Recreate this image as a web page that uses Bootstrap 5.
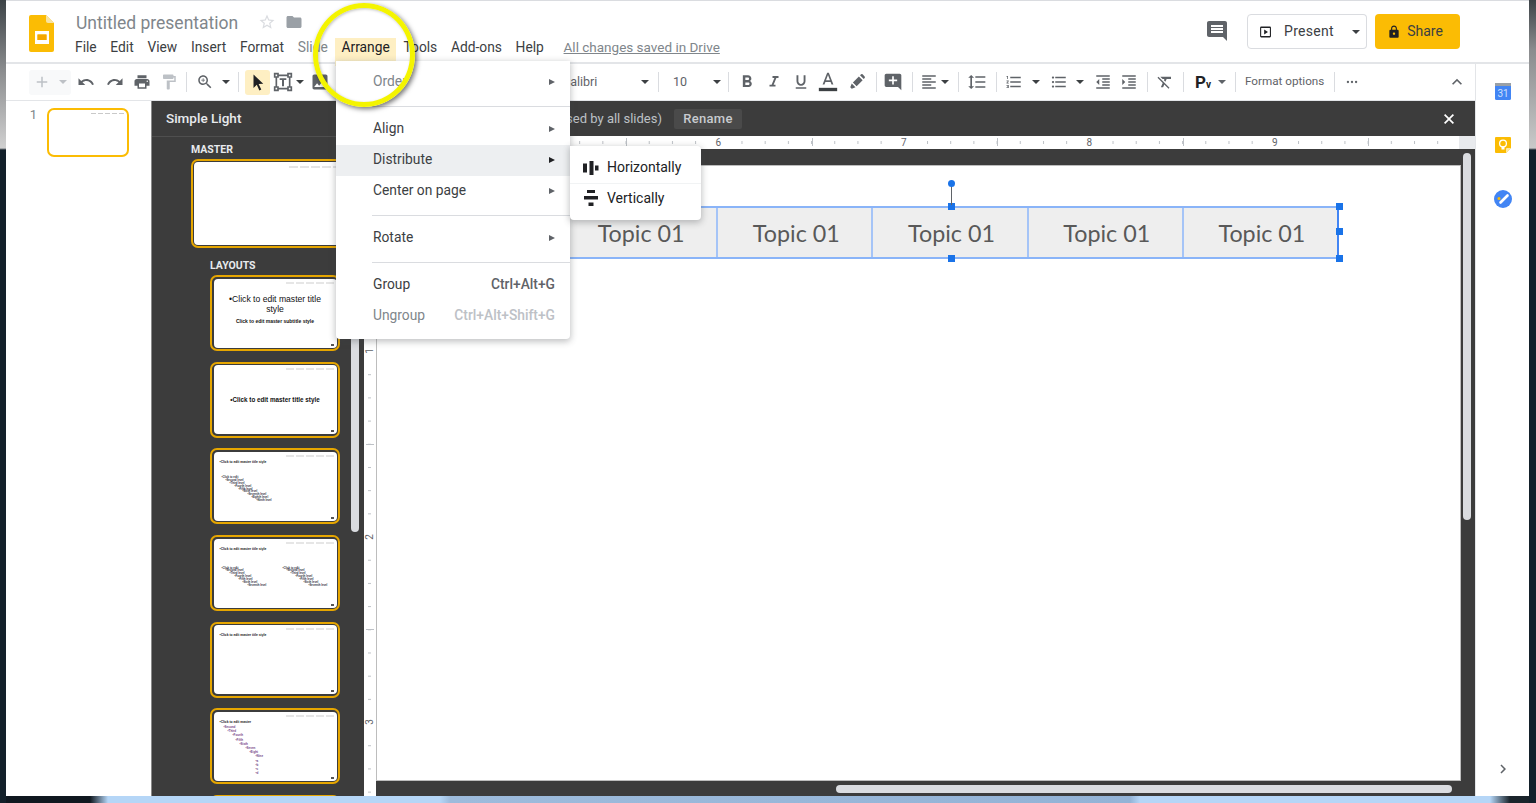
<!DOCTYPE html>
<html lang="en">
<head>
<meta charset="utf-8">
<title>Untitled presentation</title>
<link href="https://cdn.jsdelivr.net/npm/bootstrap@5.3.0/dist/css/bootstrap.min.css" rel="stylesheet">
<style>
html,body{height:803px;overflow:hidden}
body{font-family:Roboto,"Liberation Sans",sans-serif;background:#fff;color:#3c4043}
.screen{height:803px;width:1536px;padding:1px 7px 7px 6px;position:relative;
 background:
  linear-gradient(180deg,#3d4347 0,#8a8c8e 70px,#d0d0d0 148px,#13202a 150px,#13202a 100%) 0 0/6px 100% no-repeat,
  linear-gradient(180deg,#3d4347 0,#8a8c8e 50px,#c9c9c9 148px,#13202a 150px,#13202a 100%) 100% 0/7px 100% no-repeat,
  linear-gradient(90deg,#101820 0,#101820 90px,#b5d6f7 108px,#b5d6f7 440px,#9dbbdc 450px,#93b3d6 1130px,#b5d6f7 1140px,#b5d6f7 1490px,#1a242b 1510px,#1a242b 1530px,#b5d6f7 1536px) 0 100%/100% 7px no-repeat,
  #dadce0}
.appwin{height:795px;background:#fff;position:relative;overflow:hidden}
.topbar{height:61px;border-bottom:2px solid #e3e5e8;box-sizing:content-box}
.logo-box{width:70px;padding:14px 0 0 23px}
.doc-title{font-size:17.5px;line-height:22px;color:#80868b;padding-top:11px}
.title-icons{padding-top:12px;padding-left:20px;gap:9px}
.menu-row{gap:13.7px;font-size:13.8px;line-height:18px;margin-left:-1px;margin-top:4px;color:#3c4043;position:relative}
.menu-row .cur{background:linear-gradient(180deg,#feefc3 70%,#fdf3d0 100%);margin:0 -6px -10px;padding:0 6px 10px;color:#202124}
.menu-row .dim{color:#80868b}
.saved{color:#80868b;text-decoration:underline;margin-left:6px;font-size:13.5px}
.right-actions{padding:13px 69px 0 0;gap:8px}
.cmt-ic{width:24px;height:24px;fill:#5f6368;margin:5px 10px 0 0}
.present-btn{height:35px;border:1px solid #dadce0;background:#fff;color:#3c4043;font-size:14px;letter-spacing:.3px;padding:0 12px 0 11px;border-radius:4px 0 0 4px;width:100px}
.present-btn svg{width:18px;height:18px;margin-right:12px;fill:#202124}
.present-drop{height:35px;width:21px;border:1px solid #dadce0;border-left:0;background:#fff;padding:0;border-radius:0 4px 4px 0}
.share-btn{height:35px;width:85px;background:#fbbc04;border:0;color:#3c4043;font-size:14px;padding:0 5px 0 0;border-radius:4px}
.share-btn svg{width:14px;height:14px;margin-right:6px;fill:#202124}
.tri{display:inline-block;border-left:4px solid transparent;border-right:4px solid transparent;border-top:4px solid #5f6368}
.tri.dark{border-top-color:#3c4043}
.tri.pale{border-top-color:#bdc1c6}
.toolarea{height:37px;border-bottom:1px solid #e3e5e8}
.w8{width:8px}.w10{width:10px}.w12{width:12px}.w13{width:13px}.w14{width:14px}.w16{width:16px}.w18{width:18px}.w20{width:20px}.w22{width:22px}.w23{width:23px}.w24{width:24px}.w25{width:25px}.w26{width:26px}.w27{width:27px}.w28{width:28px}.w30{width:30px}.w32{width:32px}.w225{width:225px}
.tbi{height:25px;display:flex;align-items:center;justify-content:center;flex:none}
.tbi svg{width:18px;height:18px;fill:#5f6368}
.tbi svg.sm{width:20px;height:20px}
.tbi.pale svg{fill:#bdc1c6}
.tbi.on{background:#feefc3;border-radius:3px}
.tbi.on svg{fill:#202124}
.bg-pale{background:#f8f9fa}
.plus-pair{border-radius:3px;overflow:hidden}
.tsep{width:1px;height:20px;background:#dadce0;flex:none}
.sep-box{display:flex;justify-content:center;flex:none}
.to-font{width:78px;font-size:12.5px;color:#5f6368;flex:none;padding-left:1px}
.to-size{width:46px;font-size:12.5px;color:#5f6368;flex:none;padding-left:8px}
.fmt-opts{font-size:11.7px;color:#5f6368;width:79px;padding-left:1px;flex:none;white-space:nowrap}
.pv{font-weight:700;font-size:17px;color:#202124;line-height:1}
.pv small{font-size:10px;font-weight:700}
.mainarea{height:695px}
.film{width:145px;flex:none;position:relative}
.film-no{font-size:13px;color:#80868b;width:41px;text-align:right;padding:7px 10px 0 0;line-height:14px}
.film-th{margin-top:7px;width:82px;height:49px;border:2px solid #fbbc04;border-radius:7px;padding:3px 3px}
.minibar{display:flex;justify-content:flex-end;gap:2px}
.minibar i{display:block;width:5px;height:1px;background:#c9c9c9}
.minibar.big i{width:9px;height:2px;background:#e4e4e4}
.minibar.mid i{width:8px;height:2px;background:#e6e6e6}
.themes{width:213px;flex:none;background:#3c3c3c;border-left:1px solid #8a8a8a;position:relative;overflow:hidden}
.themes-h{height:36px;line-height:34px;padding-left:14px;font-size:13.5px;font-weight:500;color:#e8eaed;border-bottom:1px solid #4f4f4f}
.lbl{font-size:10.5px;font-weight:700;color:#e8eaed;line-height:14px}
.master-wrap{padding:6px 0 0 39px}
.master-th{width:160px;height:89px;margin-top:2px;border:2px solid #e6a600;border-radius:7px;padding:1px;background:#3c3c3c}
.master-in,.lay-in{background:#fff;height:100%;border-radius:4px;position:relative;overflow:hidden}
.master-in{padding:4px 6px}
.lay-wrap{padding:11px 0 0 58px}
.lay-list{gap:10.7px;margin-top:2px}
.lay-th{width:130px;height:76px;flex:none;border:2px solid #e6a600;border-radius:7px;padding:1.5px;background:#3c3c3c}
.lay-in{padding:3px 3px 0;color:#111;font-family:"Liberation Sans",sans-serif}
.t1{font-size:8.6px;line-height:10.6px;text-align:center;margin-top:10px}
.t2{font-size:5px;line-height:6px;text-align:center;margin-top:3px;font-weight:700}
.t3{font-size:6.3px;text-align:center;margin-top:26px;line-height:8px;font-weight:700}
.t4{font-size:3.3px;line-height:4px;margin:3px 0 0 3px;font-weight:700}
.pgn{position:absolute;right:3px;bottom:2px;width:3px;height:2px;background:#555}
.diag{font-size:2.8px;line-height:2.9px;margin-top:12px;color:#334;font-weight:700}
.diag div:nth-child(1){padding-left:5px}.diag div:nth-child(2){padding-left:9px}.diag div:nth-child(3){padding-left:13px}.diag div:nth-child(4){padding-left:18px}.diag div:nth-child(5){padding-left:22px}.diag div:nth-child(6){padding-left:26px}.diag div:nth-child(7){padding-left:31px}.diag div:nth-child(8){padding-left:35px}.diag div:nth-child(9){padding-left:40px}
.diag2{gap:6px;margin-top:0}
.diag2 .diag{width:55px;margin-top:16px}
.tail{font-size:3px;line-height:3.6px;font-weight:700;margin:1px 0 0 3px;color:#223}
.tail b{display:block;font-size:3px;line-height:4.2px;color:#748;font-weight:700}
.tail b:nth-of-type(1){padding-left:4px}.tail b:nth-of-type(2){padding-left:8px}.tail b:nth-of-type(3){padding-left:13px}.tail b:nth-of-type(4){padding-left:16px}.tail b:nth-of-type(5){padding-left:20px}.tail b:nth-of-type(6){padding-left:26px}.tail b:nth-of-type(7){padding-left:30px}.tail b:nth-of-type(n+8){padding-left:36px}
.pscroll{position:absolute;left:199px;top:39px;width:8px;height:392px;border-radius:4px;background:#dadce0}
.editor{flex:1;min-width:0}
.mbar{height:35px;background:#3c3c3c;color:#bdc1c6;font-size:13px}
.mbar-t{width:298px;text-align:right;white-space:nowrap;flex:none}
.rename{margin:1px 0 0 12px;height:20px;width:68px;background:#4a4a4a;color:#c8cbcf;border:0;padding:0;font-size:13px;font-weight:500;border-radius:2px;letter-spacing:.3px}
.xbtn{width:12px;height:12px;margin:0 20px 0 auto;fill:#fff}
.hrule-row{height:13px;background:#e8eaed}
.hrule{width:1095px;height:13px;background:#fff;display:block}
.rtext{font:10px Roboto,sans-serif;fill:#5f6368}
.canvas-row{height:647px}
.vrule{width:12px;height:647px;flex:none;background:#fff;display:block}
.canvas{flex:1;background:#3c3c3c;position:relative;overflow:hidden;padding:17px 15px 0 1px}
.slide{height:614px;background:#fff;box-shadow:0 0 0 1px #bdbdbd;position:relative}
.vscroll{position:absolute;right:4px;top:4px;width:8px;height:367px;background:#dadce0;border-radius:4px}
.hscroll{position:absolute;left:460px;top:636px;width:616px;height:8px;background:#dadce0;border-radius:4px}
.grp{position:absolute;left:184px;top:40px;width:778px;height:53px;display:flex;border:2px solid #8ab4f8;border-right-color:#4285f4;background:#eee}
.grp-cell{flex:1;display:flex;align-items:center;justify-content:center;font-family:Lato,"Open Sans",sans-serif;font-size:23.3px;color:#595959;border-right:2px solid #a5c4f7;padding:2px 0 0 3px}
.grp-cell:last-child{border-right:0}
.hd{position:absolute;width:7px;height:7px;background:#1a73e8}
.hd1{left:959px;top:37px}.hd2{left:959px;top:62px}.hd3{left:959px;top:89px}.hd4{left:571px;top:37px}.hd5{left:571px;top:89px}
.rotln{position:absolute;left:574px;top:18px;width:1px;height:21px;background:#5f6368}
.rotdot{position:absolute;left:571px;top:14px;width:7px;height:7px;border-radius:50%;background:#1a73e8}
.sidep{width:54px;flex:none;border-left:1px solid #e3e5e8;padding-top:19px;position:relative;gap:37px}
.sidep svg{display:block}
.chev-r{position:absolute;left:18px;top:696px;width:18px;height:18px;fill:#5f6368}
.gmenu{position:absolute;background:#fff;border:0;border-radius:0 0 4px 4px;box-shadow:0 2px 6px 1px rgba(60,64,67,.3);margin:0;font-size:14px;color:#3c4043;display:block;min-width:0}
.gmenu-main{left:330px;top:60px;width:234px;padding:6px 0 7px;z-index:20}
.gmenu-sub{left:564px;top:145px;width:131px;padding:6px 0 6px;border-radius:0 4px 4px 4px;z-index:21}
.gitem{height:31px;padding:0 15px 1px 37px;display:flex;align-items:center;justify-content:space-between;color:#3c4043;font-size:13.8px;line-height:1;background:none}
.gitem:hover{background:none;color:#3c4043}
.gitem.sel,.gitem.sel:hover{background:#edeff1;color:#3c4043}
.gitem.off,.gitem.off:hover{color:#80868b}
.gitem .kbd{color:#5f6368;font-size:13.8px;font-weight:500}
.gitem.off .kbd{color:#bdc1c6}
.arr{width:0;height:0;border-top:3.5px solid transparent;border-bottom:3.5px solid transparent;border-left:6px solid #5f6368;margin-right:0}
.sel .arr{border-left-color:#202124}
.gdiv{margin:8px 0 7px 36px;border-top:1px solid #dadce0;opacity:1}
.subitem{height:31px;padding:0 0 0 13px;display:flex;align-items:center;gap:8px;color:#202124;font-size:14px}
.subitem+.subitem{border-top:1px solid #f1f3f4;padding-bottom:2px}
.subitem svg{width:16px;height:16px;fill:#202124;flex:none}
.ring{position:absolute;left:307px;top:2px;width:102px;height:104px;border:5px solid #f4f400;border-radius:50%;box-shadow:2px 2px 5px rgba(0,0,0,.55),inset 1px 1px 3px rgba(0,0,0,.25);z-index:30;pointer-events:none}
</style>
</head>
<body>
<svg width="0" height="0" class="d-block position-absolute">
<defs>
<symbol id="i-plus" viewBox="0 0 24 24"><path d="M19 13h-6v6h-2v-6H5v-2h6V5h2v6h6z"/></symbol>
<symbol id="i-undo" viewBox="0 0 24 24"><path d="M12.5 8c-2.65 0-5.05.99-6.9 2.6L2 7v9h9l-3.62-3.62c1.39-1.16 3.16-1.88 5.12-1.88 3.54 0 6.55 2.31 7.6 5.5l2.37-.78C21.08 11.03 17.15 8 12.5 8z"/></symbol>
<symbol id="i-redo" viewBox="0 0 24 24"><path d="M18.4 10.6C16.55 8.99 14.15 8 11.5 8c-4.65 0-8.58 3.03-9.96 7.22L3.9 16c1.05-3.19 4.05-5.5 7.6-5.5 1.95 0 3.73.72 5.12 1.88L13 16h9V7l-3.6 3.6z"/></symbol>
<symbol id="i-print" viewBox="0 0 24 24"><path d="M19 8H5c-1.66 0-3 1.34-3 3v6h4v4h12v-4h4v-6c0-1.66-1.34-3-3-3zm-3 11H8v-5h8v5zm3-7c-.55 0-1-.45-1-1s.45-1 1-1 1 .45 1 1-.45 1-1 1zm-1-9H6v4h12V3z"/></symbol>
<symbol id="i-paint" viewBox="0 0 24 24"><path d="M18 4V3c0-.55-.45-1-1-1H5c-.55 0-1 .45-1 1v4c0 .55.45 1 1 1h12c.55 0 1-.45 1-1V6h1v4H9v11c0 .55.45 1 1 1h2c.55 0 1-.45 1-1v-9h8V4h-3z"/></symbol>
<symbol id="i-zoom" viewBox="0 0 24 24"><path d="M15.5 14h-.79l-.28-.27C15.41 12.59 16 11.11 16 9.5 16 5.91 13.09 3 9.5 3S3 5.91 3 9.5 5.91 16 9.5 16c1.61 0 3.09-.59 4.23-1.57l.27.28v.79l5 4.99L20.49 19l-4.99-5zm-6 0C7.01 14 5 11.99 5 9.5S7.01 5 9.5 5 14 7.01 14 9.5 11.99 14 9.5 14z"/><path d="M12 10h-2v2H9v-2H7V9h2V7h1v2h2v1z"/></symbol>
<symbol id="i-cursor" viewBox="0 0 24 24"><path d="M6 2l13 12.2-6.2.5 3.6 7.3-2.6 1.2-3.4-7.4L6 20V2z"/></symbol>
<symbol id="i-tbox" viewBox="0 0 24 24"><path d="M3 1h4v2h10V1h6v6h-2v10h2v6h-6v-2H7v2H1v-6h2V7H1V1h2zm2 2H3v2h2V3zm16 0h-2v2h2V3zM5 19H3v2h2v-2zm16 0h-2v2h2v-2zM7 5v2H5v10h2v2h10v-2h2V7h-2V5H7z"/><path d="M8 7.500h8v2.200h-2.800V17h-2.400V9.700H8z"/></symbol>
<symbol id="i-image" viewBox="0 0 24 24"><path d="M21 19V5c0-1.100-.9-2-2-2H5c-1.100 0-2 .9-2 2v14c0 1.100.9 2 2 2h14c1.100 0 2-.9 2-2zM8.500 13.500l2.500 3.010L14.500 12l4.500 6H5l3.500-4.500z"/></symbol>
<symbol id="i-bold" viewBox="0 0 24 24"><path d="M15.600 10.790c.97-.67 1.650-1.770 1.650-2.790 0-2.260-1.750-4-4-4H7v14h7.040c2.090 0 3.710-1.700 3.710-3.790 0-1.520-.86-2.820-2.150-3.420zM10 6.500h3c.83 0 1.500.67 1.500 1.500s-.67 1.500-1.500 1.500h-3v-3zm3.500 9H10v-3h3.500c.83 0 1.500.67 1.500 1.500s-.67 1.500-1.500 1.500z"/></symbol>
<symbol id="i-ital" viewBox="0 0 24 24"><path d="M10 4v2.500h2.500L8.800 15.500H6V18h8v-2.500h-2.500l3.700-9H18V4z"/></symbol>
<symbol id="i-und" viewBox="0 0 24 24"><path d="M12 17c3.310 0 6-2.690 6-6V3h-2.500v8c0 1.930-1.570 3.500-3.500 3.500S8.500 12.930 8.500 11V3H6v8c0 3.310 2.690 6 6 6zm-7 2v2h14v-2H5z"/></symbol>
<symbol id="i-color" viewBox="0 0 24 24"><path d="M11 1L5.500 15h2.250l1.120-3h6.250l1.120 3h2.250L13 1h-2zm-1.380 9L12 3.670 14.380 10H9.620z"/><rect x="1" y="19" width="22" height="4" fill="#3c4043"/></symbol>
<symbol id="i-pen" viewBox="0 0 24 24"><path d="M3 19l2-5 5 5-5 2zM6.500 12.500l8-8 5 5-8 8zM16 3l1.500-1.200a1.500 1.500 0 0 1 2 0l2.700 2.700a1.500 1.500 0 0 1 0 2L21 8z"/></symbol>
<symbol id="i-addc" viewBox="0 0 24 24"><path d="M21.990 4c0-1.100-.89-2-1.990-2H4c-1.100 0-2 .9-2 2v12c0 1.100.9 2 2 2h14l4 4-.01-18zM17 11h-4v4h-2v-4H7V9h4V5h2v4h4v2z"/></symbol>
<symbol id="i-align" viewBox="0 0 24 24"><path d="M15 15H3v2h12v-2zm0-8H3v2h12V7zM3 13h18v-2H3v2zm0 8h18v-2H3v2zM3 3v2h18V3H3z"/></symbol>
<symbol id="i-line" viewBox="0 0 24 24"><path d="M6 7h2.500L5 3.500 1.500 7H4v10H1.500L5 20.500 8.500 17H6V7zm4-2v2h12V5H10zm0 14h12v-2H10v2zm0-6h12v-2H10v2z"/></symbol>
<symbol id="i-num" viewBox="0 0 24 24"><path d="M2 17h2v.5H3v1h1v.5H2v1h3v-4H2v1zm1-9h1V4H2v1h1v3zm-1 3h1.800L2 13.100v.9h3v-1H3.200L5 10.900V10H2v1zm5-6v2h14V5H7zm0 14h14v-2H7v2zm0-6h14v-2H7v2z"/></symbol>
<symbol id="i-bul" viewBox="0 0 24 24"><path d="M4 10.500c-.83 0-1.500.67-1.500 1.500s.67 1.500 1.500 1.500 1.500-.67 1.500-1.500-.67-1.500-1.500-1.500zm0-6c-.83 0-1.500.67-1.500 1.500S3.170 7.500 4 7.500 5.500 6.830 5.500 6 4.830 4.500 4 4.500zm0 12c-.83 0-1.500.68-1.500 1.500s.68 1.500 1.500 1.500 1.500-.68 1.500-1.500-.67-1.500-1.500-1.500zM7 19h14v-2H7v2zm0-6h14v-2H7v2zm0-8v2h14V5H7z"/></symbol>
<symbol id="i-out" viewBox="0 0 24 24"><path d="M11 17h10v-2H11v2zm-8-5l4 4V8l-4 4zm0 9h18v-2H3v2zM3 3v2h18V3H3zm8 6h10V7H11v2zm0 4h10v-2H11v2z"/></symbol>
<symbol id="i-ind" viewBox="0 0 24 24"><path d="M3 21h18v-2H3v2zM3 8v8l4-4-4-4zm8 9h10v-2H11v2zM3 3v2h18V3H3zm8 6h10V7H11v2zm0 4h10v-2H11v2z"/></symbol>
<symbol id="i-clear" viewBox="0 0 24 24"><path d="M3.270 5L2 6.270l6.970 6.970L6.500 19h3l1.570-3.660L16.730 21 18 19.730 3.550 5.270 3.270 5zM6 5v.18L8.820 8h2.400l-.72 1.680 2.100 2.100L14.210 8H20V5H6z"/></symbol>
<symbol id="i-dots" viewBox="0 0 24 24"><circle cx="5" cy="12" r="2"/><circle cx="12" cy="12" r="2"/><circle cx="19" cy="12" r="2"/></symbol>
<symbol id="i-up" viewBox="0 0 24 24"><path d="M7.410 15.410L12 10.830l4.590 4.580L18 14l-6-6-6 6z"/></symbol>
<symbol id="i-cmt" viewBox="0 0 24 24"><path d="M21.990 4c0-1.100-.89-2-1.990-2H4c-1.100 0-2 .9-2 2v12c0 1.100.9 2 2 2h14l4 4-.01-18zM18 14H6v-2h12v2zm0-3H6V9h12v2zm0-3H6V6h12v2z"/></symbol>
<symbol id="i-lock" viewBox="0 0 24 24"><path d="M18 8h-1V6c0-2.760-2.240-5-5-5S7 3.240 7 6v2H6c-1.100 0-2 .9-2 2v10c0 1.100.9 2 2 2h12c1.100 0 2-.9 2-2V10c0-1.100-.9-2-2-2zm-6 9c-1.100 0-2-.9-2-2s.9-2 2-2 2 .9 2 2-.9 2-2 2zm3.100-9H8.900V6c0-1.710 1.390-3.100 3.100-3.100 1.710 0 3.100 1.390 3.100 3.100v2z"/></symbol>
<symbol id="i-star" viewBox="0 0 24 24"><path d="M22 9.240l-7.190-.62L12 2 9.190 8.630 2 9.240l5.460 4.730L5.820 21 12 17.270 18.180 21l-1.630-7.030L22 9.240zM12 15.400l-3.760 2.270 1-4.280-3.320-2.880 4.380-.38L12 6.100l1.710 4.040 4.380.38-3.320 2.880 1 4.280L12 15.400z"/></symbol>
<symbol id="i-folder" viewBox="0 0 24 24"><path d="M10 4H4c-1.100 0-1.990.9-1.990 2L2 18c0 1.100.9 2 2 2h16c1.100 0 2-.9 2-2V8c0-1.100-.9-2-2-2h-8l-2-2z"/></symbol>
<symbol id="i-close" viewBox="0 0 24 24"><path d="M22 4.400L19.600 2 12 9.600 4.400 2 2 4.400 9.600 12 2 19.600 4.400 22 12 14.400 19.600 22 22 19.600 14.400 12z"/></symbol>
<symbol id="i-play" viewBox="0 0 24 24"><path d="M4 2h16a2 2 0 0 1 2 2v16a2 2 0 0 1-2 2H4a2 2 0 0 1-2-2V4a2 2 0 0 1 2-2zm0 2.500v15h16v-15zM9.500 7.500l7 4.500-7 4.500z" fill-rule="evenodd"/></symbol>
</defs>
</svg>

<div class="screen">
<div class="appwin d-flex flex-column">

 <header class="topbar d-flex flex-none">
  <div class="logo-box flex-shrink-0">
   <svg width="25" height="37" viewBox="0 0 25 37" class="d-block"><path d="M2 0h15l8 8v27a2 2 0 0 1-2 2H2a2 2 0 0 1-2-2V2a2 2 0 0 1 2-2z" fill="#fbbc04"/><path d="M17 0l8 8h-6a2 2 0 0 1-2-2z" fill="#f7e3a3"/><path d="M6 16h14v13H6zm2.500 3.500v5.500h9v-5.500z" fill="#fff" fill-rule="evenodd"/><rect x="8.500" y="19.500" width="9" height="5.500" fill="#f5a700"/></svg>
  </div>
  <div class="flex-grow-1">
   <div class="d-flex">
    <div class="doc-title">Untitled presentation</div>
    <div class="d-flex title-icons">
     <svg width="18" height="18" fill="#dadce0"><use href="#i-star"/></svg>
     <svg width="18" height="18" fill="#9aa0a6"><use href="#i-folder"/></svg>
    </div>
   </div>
   <nav class="d-flex menu-row">
    <span>File</span><span>Edit</span><span>View</span><span>Insert</span><span>Format</span><span class="dim">Slide</span><span class="cur">Arrange</span><span>Tools</span><span>Add-ons</span><span>Help</span><span class="saved">All changes saved in Drive</span>
   </nav>
  </div>
  <div class="d-flex right-actions align-items-start flex-shrink-0">
   <svg class="cmt-ic"><use href="#i-cmt"/></svg>
   <div class="btn-group">
    <button type="button" class="btn present-btn d-flex align-items-center"><svg><use href="#i-play"/></svg>Present</button>
    <button type="button" class="btn present-drop d-flex align-items-center justify-content-center"><span class="tri dark"></span></button>
   </div>
   <button type="button" class="btn share-btn d-flex align-items-center justify-content-center"><svg><use href="#i-lock"/></svg>Share</button>
  </div>
 </header>

 <div class="d-flex flex-grow-1">
  <div class="d-flex flex-column flex-grow-1 editor">
   <div class="toolarea d-flex align-items-center">
    <div class="w23 flex-shrink-0"></div>
    <div class="d-flex plus-pair bg-pale flex-shrink-0">
     <div class="tbi pale w26"><svg><use href="#i-plus"/></svg></div>
     <div class="tbi w16"><span class="tri pale"></span></div>
    </div>
    <div class="tbi w30"><svg><use href="#i-undo"/></svg></div>
    <div class="tbi w28"><svg><use href="#i-redo"/></svg></div>
    <div class="tbi w26"><svg><use href="#i-print"/></svg></div>
    <div class="tbi pale w27"><svg><use href="#i-paint"/></svg></div>
    <div class="sep-box w8"><div class="tsep"></div></div>
    <div class="tbi w30"><svg><use href="#i-zoom"/></svg></div>
    <div class="tbi w12"><span class="tri dark"></span></div>
    <div class="sep-box w13"><div class="tsep"></div></div>
    <div class="tbi on w25"><svg><use href="#i-cursor"/></svg></div>
    <div class="tbi w26"><svg class="sm"><use href="#i-tbox"/></svg></div>
    <div class="tbi w8"><span class="tri dark"></span></div>
    <div class="tbi w32"><svg class="sm"><use href="#i-image"/></svg></div>
    <div class="flex-shrink-0 w225"></div>
    <div class="to-font">Calibri</div>
    <div class="tbi w12"><span class="tri dark"></span></div>
    <div class="sep-box w14"><div class="tsep"></div></div>
    <div class="to-size d-flex justify-content-between align-items-center"><span>10</span></div>
    <div class="tbi w12"><span class="tri dark"></span></div>
    <div class="sep-box w10"><div class="tsep"></div></div>
    <div class="tbi w27"><svg class="sm"><use href="#i-bold"/></svg></div>
    <div class="tbi w27"><svg><use href="#i-ital"/></svg></div>
    <div class="tbi w27"><svg><use href="#i-und"/></svg></div>
    <div class="tbi w28"><svg class="sm"><use href="#i-color"/></svg></div>
    <div class="tbi w30"><svg><use href="#i-pen"/></svg></div>
    <div class="sep-box w8"><div class="tsep"></div></div>
    <div class="tbi w26"><svg class="sm"><use href="#i-addc"/></svg></div>
    <div class="sep-box w12"><div class="tsep"></div></div>
    <div class="tbi w22"><svg><use href="#i-align"/></svg></div>
    <div class="tbi w10"><span class="tri dark"></span></div>
    <div class="sep-box w16"><div class="tsep"></div></div>
    <div class="tbi w22"><svg class="sm"><use href="#i-line"/></svg></div>
    <div class="sep-box w16"><div class="tsep"></div></div>
    <div class="tbi w20"><svg><use href="#i-num"/></svg></div>
    <div class="tbi w24"><span class="tri dark"></span></div>
    <div class="tbi w22"><svg><use href="#i-bul"/></svg></div>
    <div class="tbi w20"><span class="tri dark"></span></div>
    <div class="tbi w26"><svg><use href="#i-out"/></svg></div>
    <div class="tbi w26"><svg><use href="#i-ind"/></svg></div>
    <div class="sep-box w10"><div class="tsep"></div></div>
    <div class="tbi w26"><svg><use href="#i-clear"/></svg></div>
    <div class="sep-box w10"><div class="tsep"></div></div>
    <div class="tbi w30"><span class="pv">P<small>v</small></span></div>
    <div class="tbi w8"><span class="tri"></span></div>
    <div class="sep-box w18"><div class="tsep"></div></div>
    <div class="fmt-opts">Format options</div>
    <div class="sep-box w22"><div class="tsep"></div></div>
    <div class="tbi w14"><svg><use href="#i-dots"/></svg></div>
    <div class="tbi w28 ms-auto me-1"><svg class="sm"><use href="#i-up"/></svg></div>
   </div>

   <div class="mainarea d-flex">
    <aside class="film d-flex">
     <div class="film-no">1</div>
     <div class="film-th"><div class="minibar"><i></i><i></i><i></i><i></i><i></i></div></div>
    </aside>

    <aside class="themes">
     <div class="themes-h">Simple Light</div>
     <div class="master-wrap">
      <div class="lbl">MASTER</div>
      <div class="master-th"><div class="master-in"><div class="minibar big"><i></i><i></i><i></i><i></i><i></i></div></div></div>
     </div>
     <div class="lay-wrap">
      <div class="lbl">LAYOUTS</div>
      <div class="d-flex flex-column lay-list">
       <div class="lay-th"><div class="lay-in"><div class="minibar mid"><i></i><i></i><i></i><i></i><i></i></div><div class="t1">•Click to edit master title<br>style</div><div class="t2">Click to edit master subtitle style</div><span class="pgn"></span></div></div>
       <div class="lay-th"><div class="lay-in"><div class="minibar mid"><i></i><i></i><i></i><i></i><i></i></div><div class="t3">•Click to edit master title style</div><span class="pgn"></span></div></div>
       <div class="lay-th"><div class="lay-in"><div class="minibar mid"><i></i><i></i><i></i><i></i><i></i></div><div class="t4">•Click to edit master title style</div><div class="diag"><div>•Click to edit</div><div>•Second level</div><div>•Third level</div><div>•Fourth level</div><div>•Fifth level</div><div>•Sixth level</div><div>•Seventh level</div><div>•Eighth level</div><div>•Ninth level</div></div><span class="pgn"></span></div></div>
       <div class="lay-th"><div class="lay-in"><div class="minibar mid"><i></i><i></i><i></i><i></i><i></i></div><div class="t4">•Click to edit master title style</div><div class="d-flex diag2"><div class="diag"><div>•Click to edit</div><div>•Second level</div><div>•Third level</div><div>•Fourth level</div><div>•Fifth level</div><div>•Sixth level</div><div>•Seventh level</div></div><div class="diag"><div>•Click to edit</div><div>•Second level</div><div>•Third level</div><div>•Fourth level</div><div>•Fifth level</div><div>•Sixth level</div><div>•Seventh level</div></div></div><span class="pgn"></span></div></div>
       <div class="lay-th"><div class="lay-in"><div class="minibar mid"><i></i><i></i><i></i><i></i><i></i></div><div class="t4">•Click to edit master title style</div><span class="pgn"></span></div></div>
       <div class="lay-th"><div class="lay-in"><div class="minibar mid"><i></i><i></i><i></i><i></i><i></i></div><div class="t4">•Click to edit master</div><div class="tail"><b>•Second</b><b>•Third</b><b>•Fourth</b><b>•Fifth</b><b>•Sixth</b><b>•Seven</b><b>•Eight</b><b>•Nine</b><b>•a</b><b>•b</b><b>•c</b><b>•d</b></div><span class="pgn"></span></div></div>
       <div class="lay-th"><div class="lay-in"></div></div>
      </div>
     </div>
     <div class="pscroll"></div>
    </aside>

    <section class="editor d-flex flex-column">
     <div class="mbar d-flex align-items-center">
      <div class="mbar-t">Simple Light master (used by all slides)</div>
      <button type="button" class="btn rename">Rename</button>
      <svg class="xbtn"><use href="#i-close"/></svg>
     </div>
     <div class="hrule-row">
      <svg class="hrule" viewBox="0 0 1095 13">
       <defs><pattern id="tickh" x="6.45" y="0" width="23.19" height="13" patternUnits="userSpaceOnUse"><rect x="0" y="5" width="1" height="3" fill="#bdc1c6"/></pattern></defs>
       <rect width="1095" height="13" fill="url(#tickh)"/>
       <g fill="#bdc1c6"><rect x="262" y="2" width="1" height="8"/><rect x="448" y="2" width="1" height="8"/><rect x="633" y="2" width="1" height="8"/><rect x="819" y="2" width="1" height="8"/><rect x="1004" y="2" width="1" height="8"/></g>
       <g fill="#fff"><rect x="349" y="0" width="10" height="13"/><rect x="534" y="0" width="10" height="13"/><rect x="720" y="0" width="10" height="13"/><rect x="905" y="0" width="10" height="13"/></g>
       <g class="rtext" text-anchor="middle"><text x="354.300" y="10">6</text><text x="539.800" y="10">7</text><text x="725.300" y="10">8</text><text x="910.800" y="10">9</text></g>
      </svg>
     </div>
     <div class="canvas-row d-flex">
      <svg class="vrule" viewBox="0 0 12 647">
       <defs><pattern id="tickv" x="0" y="16.500" width="12" height="23.190" patternUnits="userSpaceOnUse"><rect x="4" y="0" width="3" height="1" fill="#bdc1c6"/></pattern></defs>
       <rect width="12" height="647" fill="url(#tickv)"/>
       <g fill="#bdc1c6"><rect x="2" y="109" width="8" height="1"/><rect x="2" y="295" width="8" height="1"/><rect x="2" y="480" width="8" height="1"/></g>
       <g fill="#fff"><rect x="0" y="197" width="12" height="10"/><rect x="0" y="383" width="12" height="10"/><rect x="0" y="568" width="12" height="10"/></g>
       <g class="rtext" text-anchor="middle"><text transform="translate(9,202) rotate(-90)">1</text><text transform="translate(9,388) rotate(-90)">2</text><text transform="translate(9,573) rotate(-90)">3</text></g>
      </svg>
      <div class="canvas">
       <div class="slide">
        <div class="grp">
         <div class="grp-cell">Topic 01</div><div class="grp-cell">Topic 01</div><div class="grp-cell">Topic 01</div><div class="grp-cell">Topic 01</div><div class="grp-cell">Topic 01</div>
        </div>
        <i class="hd hd1"></i><i class="hd hd2"></i><i class="hd hd3"></i><i class="hd hd4"></i><i class="hd hd5"></i>
        <i class="rotln"></i><i class="rotdot"></i>
       </div>
       <div class="vscroll"></div>
       <div class="hscroll"></div>
      </div>
     </div>
    </section>
   </div>
  </div>

  <aside class="sidep d-flex flex-column align-items-center">
   <svg width="16" height="17" viewBox="0 0 16 17"><rect width="16" height="17" rx="1.500" fill="#4285f4"/><rect width="16" height="3" fill="#9aa0a6"/><text x="8" y="14" font-size="10" font-family="Roboto,sans-serif" text-anchor="middle" fill="#cfe0fb">31</text></svg>
   <svg width="16" height="16" viewBox="0 0 16 16"><path d="M1 0h14a1 1 0 0 1 1 1v10l-5 5H1a1 1 0 0 1-1-1V1a1 1 0 0 1 1-1z" fill="#fbbc04"/><path d="M16 11l-5 5v-4a1 1 0 0 1 1-1z" fill="#fde9a8"/><circle cx="8" cy="6.500" r="3.400" fill="none" stroke="#fff" stroke-width="1.300"/><rect x="6.500" y="9.500" width="3" height="3" fill="#fff"/></svg>
   <svg width="18" height="18" viewBox="0 0 18 18"><circle cx="9" cy="9" r="9" fill="#4285f4"/><path d="M6.500 12.500L13.500 5.500" stroke="#fff" stroke-width="2.600" stroke-linecap="round"/><circle cx="5" cy="8.500" r="1.500" fill="#fbbc04"/></svg>
   <svg class="chev-r" viewBox="0 0 24 24"><path d="M10 6L8.590 7.410 13.170 12l-4.580 4.590L10 18l6-6z"/></svg>
  </aside>
 </div>

 <div class="dropdown-menu gmenu gmenu-main">
  <div class="dropdown-item gitem off"><span>Order</span><i class="arr"></i></div>
  <hr class="gdiv">
  <div class="dropdown-item gitem"><span>Align</span><i class="arr"></i></div>
  <div class="dropdown-item gitem sel"><span>Distribute</span><i class="arr"></i></div>
  <div class="dropdown-item gitem"><span>Center on page</span><i class="arr"></i></div>
  <hr class="gdiv">
  <div class="dropdown-item gitem"><span>Rotate</span><i class="arr"></i></div>
  <hr class="gdiv">
  <div class="dropdown-item gitem"><span>Group</span><span class="kbd">Ctrl+Alt+G</span></div>
  <div class="dropdown-item gitem off"><span>Ungroup</span><span class="kbd">Ctrl+Alt+Shift+G</span></div>
 </div>
 <div class="dropdown-menu gmenu gmenu-sub">
  <div class="subitem"><svg viewBox="0 0 16 16"><rect x="0" y="3.500" width="4" height="9"/><rect x="6.500" y="1" width="4" height="14"/><rect x="12" y="5.500" width="3.500" height="5"/></svg><span>Horizontally</span></div>
  <div class="subitem"><svg viewBox="0 0 16 16"><rect x="4" y="0" width="8" height="3"/><rect x="1" y="6" width="14" height="3.500"/><rect x="5.500" y="12.500" width="5" height="3.500"/></svg><span>Vertically</span></div>
 </div>
 <div class="ring"></div>
</div>
</div>
</body>
</html>
